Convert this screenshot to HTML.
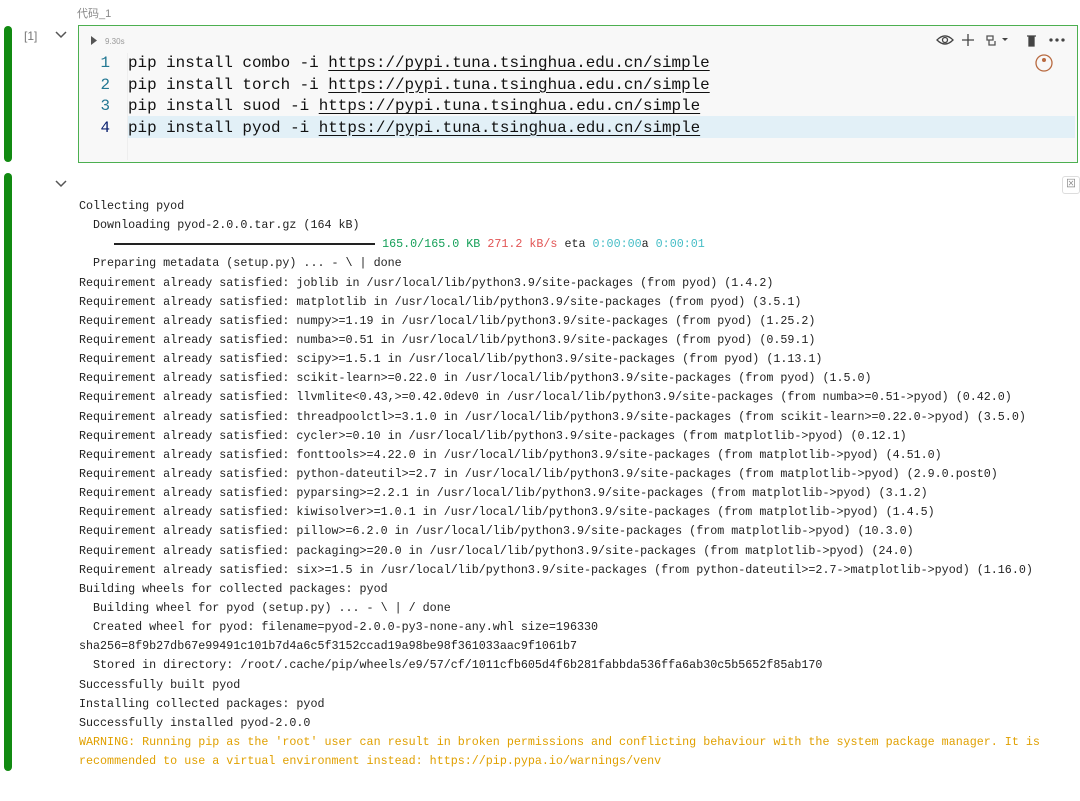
<!DOCTYPE html>
<html><head><meta charset="utf-8"><style>
body{margin:0;width:1080px;height:801px;background:#fff;position:relative;font-family:"Liberation Sans","Noto Sans CJK SC",sans-serif;overflow:hidden}
.abs{position:absolute}
.bar{position:absolute;left:4px;width:8px;background:#118a11;border-radius:4px}
.code{font-family:"Liberation Mono",monospace;font-size:15.9px;line-height:21.6px;color:#111}
.ln{position:absolute;left:96px;width:14px;text-align:right;color:#237893}
.u{text-decoration:underline;text-underline-offset:3px}
pre{margin:0;font-family:"Liberation Mono",monospace;font-size:11.7px;line-height:19.14px;color:#222}
.g{color:#17a05a}.r{color:#e25555}.c{color:#46bdc6}.w{color:#e0a000}
</style></head><body>
<div class="abs" style="left:77px;top:5px;font-size:11px;color:#888">代码_1</div>
<div class="bar" style="top:26px;height:136px"></div>
<div class="abs" style="left:24px;top:29px;font-size:12px;color:#777">[1]</div>
<svg class="abs" style="left:55px;top:31px" width="12" height="8"><path d="M1 1l5 5 5-5" stroke="#555" stroke-width="1.5" fill="none"/></svg>
<div class="abs" style="left:78px;top:25px;width:998px;height:136px;border:1px solid #4caf50;background:#f8f8f8"></div>
<svg class="abs" style="left:90px;top:36px" width="8" height="9"><path d="M1 0l6 4.5-6 4.5z" fill="#555"/></svg>
<div class="abs" style="left:105px;top:37px;font-size:8px;color:#999">9.30s</div>
<div class="abs" style="left:128px;top:116px;width:947px;height:22px;background:#e2f0f7"></div>
<div class="abs" style="left:127px;top:53px;width:1px;height:107px;background:#eee"></div>
<div class="abs code" style="left:0;top:53px;width:1080px">
<div style="position:relative;height:21.6px"><span class="ln">1</span><span style="position:absolute;left:128px">pip install combo -i <span class="u">https://pypi.tuna.tsinghua.edu.cn/simple</span></span></div>
<div style="position:relative;height:21.6px"><span class="ln">2</span><span style="position:absolute;left:128px">pip install torch -i <span class="u">https://pypi.tuna.tsinghua.edu.cn/simple</span></span></div>
<div style="position:relative;height:21.6px"><span class="ln">3</span><span style="position:absolute;left:128px">pip install suod -i <span class="u">https://pypi.tuna.tsinghua.edu.cn/simple</span></span></div>
<div style="position:relative;height:21.6px"><span class="ln" style="color:#0b216f">4</span><span style="position:absolute;left:128px">pip install pyod -i <span class="u">https://pypi.tuna.tsinghua.edu.cn/simple</span></span></div>
</div>
<svg class="abs" style="left:936px;top:33px" width="140" height="40" fill="none" stroke="#444" stroke-width="1.3">
<path d="M1 7q8-8 16 0q-8 8-16 0z"/><circle cx="9" cy="7" r="2.5"/>
<path d="M32 1v12M26 7h12"/>
<path d="M51 3h6v4h-6zM53 7v5h6v-4" stroke="#555"/><path d="M66 5l3 3 3-3z" fill="#444" stroke="none"/>
<path d="M91 3h9M93 4h5v9h-5z" fill="#444"/>
<circle cx="115" cy="7" r="1" fill="#444"/><circle cx="121" cy="7" r="1" fill="#444"/><circle cx="127" cy="7" r="1" fill="#444"/>
<circle cx="108" cy="30" r="8" stroke="#b86a40"/><circle cx="108" cy="27" r="2" fill="#b86a40" stroke="none"/>
</svg>
<div class="bar" style="top:173px;height:598px"></div>
<svg class="abs" style="left:55px;top:180px" width="12" height="8"><path d="M1 1l5 5 5-5" stroke="#555" stroke-width="1.5" fill="none"/></svg>
<div class="abs" style="left:1062px;top:176px;width:16px;height:16px;border:1px solid #ddd;border-radius:3px;font-size:10px;color:#888;text-align:center;line-height:16px">⊠</div>
<pre class="abs" style="left:79px;top:197px">Collecting pyod
  Downloading pyod-2.0.0.tar.gz (164 kB)
     <span style="display:inline-block;width:261px;height:2px;background:#222;vertical-align:middle"></span> <span class="g">165.0/165.0 KB</span> <span class="r">271.2 kB/s</span> eta <span class="c">0:00:00</span>a <span class="c">0:00:01</span>
  Preparing metadata (setup.py) ... - \ | done
Requirement already satisfied: joblib in /usr/local/lib/python3.9/site-packages (from pyod) (1.4.2)
Requirement already satisfied: matplotlib in /usr/local/lib/python3.9/site-packages (from pyod) (3.5.1)
Requirement already satisfied: numpy>=1.19 in /usr/local/lib/python3.9/site-packages (from pyod) (1.25.2)
Requirement already satisfied: numba>=0.51 in /usr/local/lib/python3.9/site-packages (from pyod) (0.59.1)
Requirement already satisfied: scipy>=1.5.1 in /usr/local/lib/python3.9/site-packages (from pyod) (1.13.1)
Requirement already satisfied: scikit-learn>=0.22.0 in /usr/local/lib/python3.9/site-packages (from pyod) (1.5.0)
Requirement already satisfied: llvmlite&lt;0.43,&gt;=0.42.0dev0 in /usr/local/lib/python3.9/site-packages (from numba&gt;=0.51-&gt;pyod) (0.42.0)
Requirement already satisfied: threadpoolctl&gt;=3.1.0 in /usr/local/lib/python3.9/site-packages (from scikit-learn&gt;=0.22.0-&gt;pyod) (3.5.0)
Requirement already satisfied: cycler&gt;=0.10 in /usr/local/lib/python3.9/site-packages (from matplotlib-&gt;pyod) (0.12.1)
Requirement already satisfied: fonttools&gt;=4.22.0 in /usr/local/lib/python3.9/site-packages (from matplotlib-&gt;pyod) (4.51.0)
Requirement already satisfied: python-dateutil&gt;=2.7 in /usr/local/lib/python3.9/site-packages (from matplotlib-&gt;pyod) (2.9.0.post0)
Requirement already satisfied: pyparsing&gt;=2.2.1 in /usr/local/lib/python3.9/site-packages (from matplotlib-&gt;pyod) (3.1.2)
Requirement already satisfied: kiwisolver&gt;=1.0.1 in /usr/local/lib/python3.9/site-packages (from matplotlib-&gt;pyod) (1.4.5)
Requirement already satisfied: pillow&gt;=6.2.0 in /usr/local/lib/python3.9/site-packages (from matplotlib-&gt;pyod) (10.3.0)
Requirement already satisfied: packaging&gt;=20.0 in /usr/local/lib/python3.9/site-packages (from matplotlib-&gt;pyod) (24.0)
Requirement already satisfied: six&gt;=1.5 in /usr/local/lib/python3.9/site-packages (from python-dateutil&gt;=2.7-&gt;matplotlib-&gt;pyod) (1.16.0)
Building wheels for collected packages: pyod
  Building wheel for pyod (setup.py) ... - \ | / done
  Created wheel for pyod: filename=pyod-2.0.0-py3-none-any.whl size=196330
sha256=8f9b27db67e99491c101b7d4a6c5f3152ccad19a98be98f361033aac9f1061b7
  Stored in directory: /root/.cache/pip/wheels/e9/57/cf/1011cfb605d4f6b281fabbda536ffa6ab30c5b5652f85ab170
Successfully built pyod
Installing collected packages: pyod
Successfully installed pyod-2.0.0
<span class="w">WARNING: Running pip as the 'root' user can result in broken permissions and conflicting behaviour with the system package manager. It is
recommended to use a virtual environment instead: https://pip.pypa.io/warnings/venv</span></pre>
</body></html>
